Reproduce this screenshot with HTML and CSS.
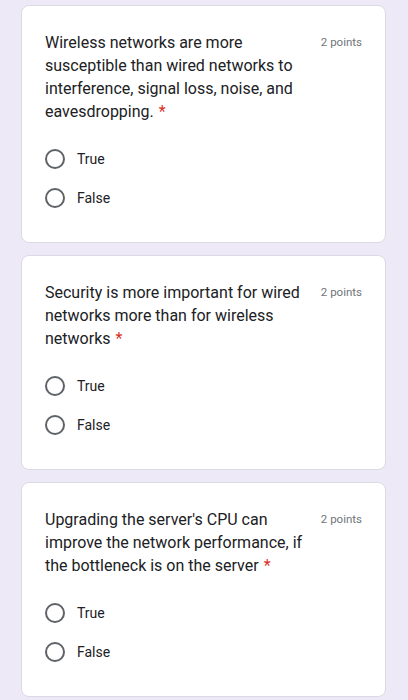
FILE: index.html
```html
<html lang="en">

<head>
    <meta charset="UTF-8">
    <meta name="viewport" content="width=device-width, initial-scale=1.0">
    <title>Quiz</title>
    <link rel="stylesheet" href="styles.css">
</head>

<body>

    <div class="card">
        <div class="question">
            <p class="title">Wireless networks are more susceptible than wired networks to interference, signal loss, noise, and eavesdropping.<span class="req">*</span></p>
            <span class="points">2 points</span>
        </div>
        <div class="option"><span class="radio"></span><span class="label">True</span></div>
        <div class="option"><span class="radio"></span><span class="label">False</span></div>
    </div>

    <div class="card">
        <div class="question">
            <p class="title">Security is more important for wired networks more than for wireless networks<span class="req">*</span></p>
            <span class="points">2 points</span>
        </div>
        <div class="option"><span class="radio"></span><span class="label">True</span></div>
        <div class="option"><span class="radio"></span><span class="label">False</span></div>
    </div>

    <div class="card">
        <div class="question">
            <p class="title">Upgrading the server's CPU can improve the network performance, if the bottleneck is on the server<span class="req">*</span></p>
            <span class="points">2 points</span>
        </div>
        <div class="option"><span class="radio"></span><span class="label">True</span></div>
        <div class="option"><span class="radio"></span><span class="label">False</span></div>
    </div>

</body>

</html>
```

FILE: styles.css
```css
body {
    margin: 0;
    padding: 5px 22px 0 21px;
    background-color: #ede9f6;
    font-family: Roboto, "Open Sans", sans-serif;
    color: #202124;
}

.card {
    background-color: white;
    border: 1px solid #dcdae4;
    border-radius: 8px;
    padding: 25px 23px 25px 23px;
    margin-bottom: 12px;
}

.question {
    display: flex;
    align-items: flex-start;
    margin-bottom: 16px;
}

.title {
    flex: 1;
    margin: 0;
    font-size: 16px;
    line-height: 23px;
    padding-right: 8px;
}

.req {
    color: #d93025;
    margin-left: 5px;
}

.points {
    font-size: 11.5px;
    color: #70757a;
    line-height: 23px;
    white-space: nowrap;
}

.option {
    display: flex;
    align-items: center;
    height: 39px;
}

.radio {
    width: 16px;
    height: 16px;
    border: 2px solid #5f6368;
    border-radius: 50%;
}

.label {
    margin-left: 12px;
    font-size: 14px;
}
```
